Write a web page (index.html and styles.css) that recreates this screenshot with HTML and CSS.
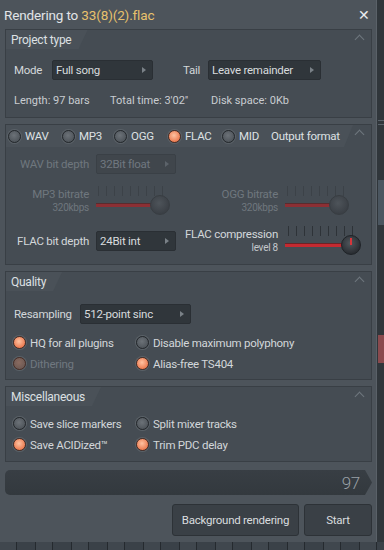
FILE: index.html
```html
<!DOCTYPE html>
<html lang="en">
  <head>
    <meta charset="UTF-8" />
    <meta name="viewport" content="width=device-width, initial-scale=1.0" />
    <title>Rendering</title>
    <link rel="stylesheet" href="styles.css">
  </head>
  <body>
    <div class="screen">
      <div class="dialog">
        <div class="titlebar">
          <span>Rendering to <span class="file">33(8)(2).flac</span></span>
          <span class="close">&#x2715;</span>
        </div>

        <div class="section s-project">
          <div class="sec-head">
            <div class="tab">Project type</div>
            <span class="chev"></span>
          </div>
          <div class="row mode-row">
            <span class="lbl">Mode</span>
            <div class="drop w-mode">Full song</div>
            <span class="lbl tail-lbl">Tail</span>
            <div class="drop w-tail">Leave remainder</div>
          </div>
          <div class="row info-row">
            <span class="i1">Length: 97 bars</span>
            <span class="i2">Total time: 3'02''</span>
            <span class="i3">Disk space: 0Kb</span>
          </div>
        </div>

        <div class="section s-format">
          <div class="sec-head">
            <div class="tab tab-wide">
              <label class="radio r1"><span class="dot"></span>WAV</label>
              <label class="radio r2"><span class="dot"></span>MP3</label>
              <label class="radio r3"><span class="dot"></span>OGG</label>
              <label class="radio r4"><span class="dot on"></span>FLAC</label>
              <label class="radio r5"><span class="dot"></span>MID</label>
              <span class="fmt-title">Output format</span>
            </div>
            <span class="chev"></span>
          </div>
          <div class="fgrid">
            <div class="fl off">WAV bit depth</div>
            <div class="drop off">32Bit float</div>
            <div></div>
            <div></div>

            <div class="fl off">MP3 bitrate<small>320kbps</small></div>
            <div class="slider dim mp3"><span class="ticks"></span><span class="line"></span><span class="knob"></span></div>
            <div class="fl off">OGG bitrate<small>320kbps</small></div>
            <div class="slider dim ogg"><span class="ticks"></span><span class="line"></span><span class="knob"></span></div>

            <div class="fl">FLAC bit depth</div>
            <div class="drop">24Bit int</div>
            <div class="fl">FLAC compression<small class="lev">level 8</small></div>
            <div class="slider flac"><span class="ticks"></span><span class="line"></span><span class="knob"></span></div>
          </div>
        </div>

        <div class="section s-quality">
          <div class="sec-head">
            <div class="tab">Quality</div>
            <span class="chev"></span>
          </div>
          <div class="row resamp-row">
            <span class="lbl">Resampling</span>
            <div class="drop w-resamp">512-point sinc</div>
          </div>
          <div class="opts">
            <label class="radio"><span class="dot on"></span>HQ for all plugins</label>
            <label class="radio"><span class="dot"></span>Disable maximum polyphony</label>
            <label class="radio off"><span class="dot on dim"></span>Dithering</label>
            <label class="radio"><span class="dot on"></span>Alias-free TS404</label>
          </div>
        </div>

        <div class="section s-misc">
          <div class="sec-head">
            <div class="tab">Miscellaneous</div>
            <span class="chev"></span>
          </div>
          <div class="opts">
            <label class="radio"><span class="dot"></span>Save slice markers</label>
            <label class="radio"><span class="dot"></span>Split mixer tracks</label>
            <label class="radio"><span class="dot on"></span>Save ACIDized&trade;</label>
            <label class="radio"><span class="dot on"></span>Trim PDC delay</label>
          </div>
        </div>

        <div class="progress"><span>97</span></div>

        <div class="buttons">
          <button class="btn bg-btn">Background rendering</button>
          <button class="btn start-btn">Start</button>
        </div>
      </div>
      <div class="behind">
        <span class="mark m1"></span>
        <span class="mark m2"></span>
        <span class="mark m3"></span>
        <span class="mark m4"></span>
      </div>
    </div>
    <div class="keys"></div>
  </body>
</html>
```

FILE: styles.css
```css
body {
  margin: 0;
  width: 384px;
  height: 550px;
  overflow: hidden;
  background: #2d3237;
  font-family: Roboto, "Noto Sans", sans-serif;
  font-size: 11.5px;
  letter-spacing: -0.25px;
  color: #d3d7da;
}
.screen {
  display: flex;
  height: 542px;
}
.dialog {
  width: 376px;
  background: #4d545b;
  border-right: 1px solid #5a6168;
  display: flex;
  flex-direction: column;
}
.behind {
  flex: 1;
  background: #30363b;
  display: flex;
  flex-direction: column;
}
.mark {
  display: block;
  height: 1px;
  background: #59626a;
  margin-left: 1px;
}
.m1 { margin-top: 120px; }
.m2 { margin-top: 3px; }
.m3 { margin-top: 55px; height: 45px; background: #4b5660; }
.m4 { margin-top: 110px; height: 28px; background: #8a4a4e; }
.keys {
  height: 8px;
  background: repeating-linear-gradient(90deg, #40474e 0 16px, #252a2f 16px 17px, #3a4148 17px 35px, #252a2f 35px 36px);
}

/* title */
.titlebar {
  height: 29px;
  display: flex;
  align-items: center;
  justify-content: space-between;
  padding: 0 6px 0 4px;
  font-size: 13.5px;
  letter-spacing: -0.15px;
  color: #e1e4e7;
}
.file {
  color: #e7c16c;
}
.close {
  font-size: 14px;
  color: #e8ebee;
}

/* sections */
.section {
  margin: 0 4px 6px 5px;
  background: #454c53;
  border: 1px solid #393f45;
  box-sizing: border-box;
}
.s-project { height: 89px; }
.s-format { height: 141px; }
.s-quality { height: 109px; }
.s-misc { height: 76px; margin-bottom: 8px; }

.sec-head {
  height: 19px;
  display: flex;
  align-items: center;
  position: relative;
}
.tab {
  height: 100%;
  display: flex;
  align-items: center;
  padding: 0 16px 0 5px;
  background: #4a5158;
  clip-path: polygon(0 0, 100% 0, calc(100% - 9px) 100%, 0 100%);
  font-size: 12px;
  color: #dde0e3;
}
.chev {
  position: absolute;
  right: 8px;
  top: 6px;
  width: 6px;
  height: 6px;
  border-left: 1px solid #6f777e;
  border-top: 1px solid #6f777e;
  transform: rotate(45deg);
}
.s-format .sec-head {
  height: 22px;
}
.tab-wide {
  width: 347px;
  box-sizing: border-box;
  padding: 0 0 0 2px;
  white-space: nowrap;
  font-size: 11.5px;
}
.r1 { width: 54px; }
.r2 { width: 52px; }
.r3 { width: 54px; }
.r4 { width: 54px; }
.r5 { width: 49px; }

/* rows */
.row {
  display: flex;
  align-items: center;
}
.lbl {
  color: #d3d7da;
}
.mode-row {
  height: 20px;
  margin-top: 11px;
  padding-left: 8px;
}
.mode-row .lbl:first-child {
  width: 38px;
}
.tail-lbl {
  margin-left: 30px;
  width: 25px;
}
.info-row {
  margin-top: 14px;
  padding-left: 8px;
  font-size: 11px;
  letter-spacing: 0;
  color: #c9cdd1;
}
.i1 { width: 96px; }
.i2 { width: 101px; }

.drop {
  height: 20px;
  box-sizing: border-box;
  background: #30363b;
  border: 1px solid #2a2f34;
  border-radius: 2px;
  padding: 0 14px 0 3px;
  display: flex;
  align-items: center;
  position: relative;
  color: #d8dbde;
}
.drop::after {
  content: "";
  position: absolute;
  right: 6px;
  top: 6px;
  border-left: 4px solid #7a8187;
  border-top: 3.5px solid transparent;
  border-bottom: 3.5px solid transparent;
}
.drop.off {
  color: #707880;
  background: #40464c;
  border-color: #3a4046;
}
.drop.off::after {
  border-left-color: #5c636a;
}
.w-mode { width: 101px; }
.w-tail { width: 113px; }
.w-resamp { width: 111px; }

/* format grid */
.fgrid {
  display: grid;
  grid-template-columns: 83px 80px 95px 74px;
  grid-template-rows: 34px 40px 40px;
  column-gap: 7px;
  align-items: center;
}
.fl {
  text-align: right;
  line-height: 13px;
  white-space: nowrap;
  color: #d3d7da;
}
.fl small {
  display: block;
  font-size: 10px;
  color: #c4c8cc;
}
.fl.off, .fl.off small {
  color: #6f777e;
}
.slider {
  position: relative;
  height: 30px;
}
.ticks {
  position: absolute;
  left: 3px;
  right: 6px;
  top: 0;
  height: 10px;
  background: repeating-linear-gradient(90deg, #2e3338 0 1px, transparent 1px 8px);
}
.line {
  position: absolute;
  left: 0;
  right: 8px;
  top: 17px;
  height: 3px;
  background: #c42a31;
  border-top: 1px solid #6e2226;
}
.knob {
  position: absolute;
  right: -2px;
  top: 9px;
  width: 18px;
  height: 18px;
  border-radius: 50%;
  background: radial-gradient(circle at 45% 40%, #50565c, #2a2e33 70%);
  border: 1px solid #1f2327;
}
.knob::after {
  content: "";
  position: absolute;
  left: 8px;
  top: 2px;
  width: 2px;
  height: 7px;
  background: #d4363c;
}
.dim .ticks {
  background: repeating-linear-gradient(90deg, #3c4248 0 1px, transparent 1px 8px);
}
.dim .line {
  background: #8c2f34;
  border-top-color: #5a2b2e;
}
.dim .knob {
  background: radial-gradient(circle at 45% 40%, #4e545a, #3b4046 70%);
  border-color: #383d42;
}
.dim .knob::after {
  display: none;
}
.mp3 .ticks, .ogg .ticks { left: 2px; right: 12px; }
.mp3 .line, .ogg .line { right: 12px; }
.mp3 .knob { right: 6px; }
.ogg .knob { right: 10px; }

/* radios */
.radio {
  display: inline-flex;
  align-items: center;
  white-space: nowrap;
}
.dot {
  width: 13px;
  height: 13px;
  box-sizing: border-box;
  border-radius: 50%;
  border: 1px solid #25292d;
  background: radial-gradient(circle at 45% 40%, #6c7278, #50565c 70%);
  box-shadow: 0 0 0 1px #5b6268;
  margin-right: 4px;
}
.dot.on {
  border-color: #4a2e26;
  background: radial-gradient(circle at 45% 40%, #ffc2a1, #ec7d53 70%);
}
.dot.dim {
  background: radial-gradient(circle at 45% 40%, #8a6b60, #6e5a54 70%);
}
.radio.off {
  color: #707880;
}

/* quality / misc */
.resamp-row {
  height: 20px;
  margin-top: 13px;
  padding-left: 8px;
}
.resamp-row .lbl {
  width: 66px;
}
.opts {
  display: grid;
  grid-template-columns: 123px auto;
  grid-auto-rows: 21px;
  align-items: center;
  padding-left: 7px;
  margin-top: 8px;
}
.s-misc .opts {
  margin-top: 7px;
}

/* progress */
.progress {
  height: 25px;
  margin: 0 4px 9px 5px;
  background: linear-gradient(#383e44, #33393e);
  border-radius: 5px 0 0 5px;
  clip-path: polygon(0 0, calc(100% - 7px) 0, 100% 50%, calc(100% - 7px) 100%, 0 100%);
  display: flex;
  align-items: center;
  justify-content: flex-end;
  padding-right: 12px;
  font-size: 17px;
  font-weight: 300;
  color: #9aa1a7;
}

/* buttons */
.buttons {
  display: flex;
  justify-content: flex-end;
  gap: 5px;
  padding-right: 4px;
}
.btn {
  height: 32px;
  padding: 0;
  white-space: nowrap;
  background: #3a4046;
  border: 1px solid #2d3237;
  border-radius: 3px;
  color: #d9dcdf;
  font-family: Roboto, "Noto Sans", sans-serif;
  font-size: 11.5px;
  letter-spacing: -0.25px;
  cursor: pointer;
}
.bg-btn { width: 127px; }
.start-btn { width: 68px; }
```
